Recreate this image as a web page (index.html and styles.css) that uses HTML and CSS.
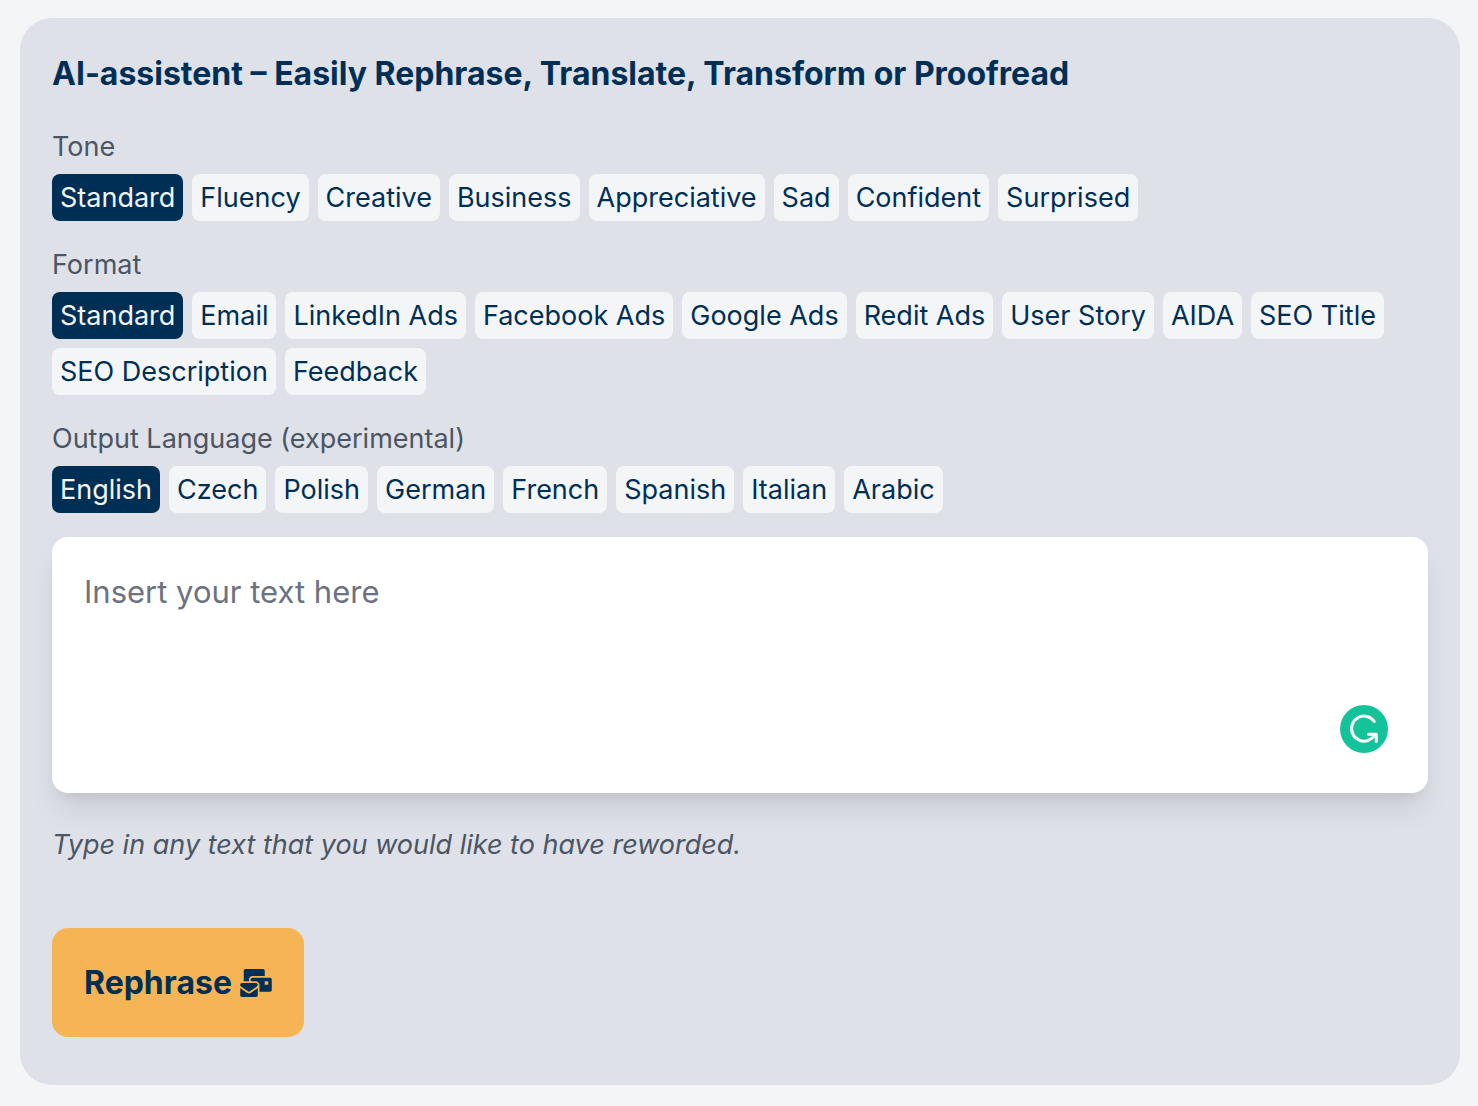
FILE: index.html
```html
<!DOCTYPE html>
<html lang="en">
<head>
    <meta charset="UTF-8">
    <meta name="viewport" content="width=device-width, initial-scale=1.0">
    <title>AI-assistent</title>
    <link rel="stylesheet" href="styles.css">
</head>
<body>
<main class="assistant">
    <h1 class="title">AI-assistent – Easily Rephrase, Translate, Transform or Proofread</h1>
    <form class="assistant-form">
        <section class="group" aria-labelledby="tone-label">
            <h2 class="group-label" id="tone-label">Tone</h2>
            <div class="options">
                <button type="button" class="option active">Standard</button>
                <button type="button" class="option">Fluency</button>
                <button type="button" class="option">Creative</button>
                <button type="button" class="option">Business</button>
                <button type="button" class="option">Appreciative</button>
                <button type="button" class="option">Sad</button>
                <button type="button" class="option">Confident</button>
                <button type="button" class="option">Surprised</button>
            </div>
        </section>
        <section class="group" aria-labelledby="format-label">
            <h2 class="group-label" id="format-label">Format</h2>
            <div class="options">
                <button type="button" class="option active">Standard</button>
                <button type="button" class="option">Email</button>
                <button type="button" class="option">LinkedIn Ads</button>
                <button type="button" class="option">Facebook Ads</button>
                <button type="button" class="option">Google Ads</button>
                <button type="button" class="option">Redit Ads</button>
                <button type="button" class="option">User Story</button>
                <button type="button" class="option">AIDA</button>
                <button type="button" class="option">SEO Title</button>
                <button type="button" class="option">SEO Description</button>
                <button type="button" class="option">Feedback</button>
            </div>
        </section>
        <section class="group" aria-labelledby="language-label">
            <h2 class="group-label" id="language-label">Output Language (experimental)</h2>
            <div class="options">
                <button type="button" class="option active">English</button>
                <button type="button" class="option">Czech</button>
                <button type="button" class="option">Polish</button>
                <button type="button" class="option">German</button>
                <button type="button" class="option">French</button>
                <button type="button" class="option">Spanish</button>
                <button type="button" class="option">Italian</button>
                <button type="button" class="option">Arabic</button>
            </div>
        </section>
        <div class="editor">
            <textarea class="editor-input" id="source-text" placeholder="Insert your text here"></textarea>
            <svg class="editor-badge" viewBox="0 0 48 48" aria-hidden="true">
                <circle cx="24" cy="24" r="24" fill="#15c39a"/>
                <g fill="none" stroke="#fff" stroke-width="3" stroke-linecap="round" stroke-linejoin="round">
                    <path d="M34.300 16.500A12.500 12.500 0 1 0 28 35.500Q32.500 33.800 35.500 29.500"/>
                    <path d="M28.500 29.200H36.300V36.500"/>
                </g>
            </svg>
        </div>
        <label class="hint" for="source-text">Type in any text that you would like to have reworded.</label>
        <button type="submit" class="submit">
            Rephrase
            <svg class="submit-icon" viewBox="0 0 576 512" aria-hidden="true">
                <path fill="currentColor" d="M160 448c-25.600 0-51.200-22.400-64-32-64-44.800-83.200-60.800-96-70.400V480c0 17.670 14.330 32 32 32h256c17.670 0 32-14.330 32-32V345.600c-12.800 9.600-32 25.600-96 70.400-12.800 9.600-38.400 32-64 32zm128-192H32c-17.670 0-32 14.330-32 32v16c25.600 19.200 22.400 19.200 115.200 86.400 9.600 6.400 28.800 25.600 44.800 25.600s35.200-19.200 44.800-25.600c92.800-67.200 89.600-67.200 115.200-86.400V288c0-17.670-14.330-32-32-32zm256-96H224c-17.670 0-32 14.330-32 32v32h96c33.210 0 60.590 25.420 63.710 57.820l.29-.22V416h192c17.670 0 32-14.330 32-32V192c0-17.670-14.330-32-32-32zm-32 128h-64v-64h64v64zm-352-96c0-35.290 28.710-64 64-64h224V32c0-17.670-14.330-32-32-32H96C78.330 0 64 14.330 64 32v192h96v-32z"/>
            </svg>
        </button>
    </form>
</main>

<script>
    document.querySelectorAll('.options').forEach((group) => {
        group.addEventListener('click', (e) => {
            if (!e.target.classList.contains('option')) return;
            group.querySelector('.active').classList.remove('active');
            e.target.classList.add('active');
        });
    });

    document.querySelector('.assistant-form').addEventListener('submit', (e) => {
        e.preventDefault();
    });
</script>
</body>
</html>
```
FILE: styles.css
```css
body {
    margin: 0;
    padding: 18px 18px 20px 20px;
    background: #f3f5f7;
    color: #002f56;
    font-family: Inter, "Liberation Sans", sans-serif;
}

button, textarea {
    font-family: inherit;
    color: inherit;
}

.assistant {
    padding: 32px 32px 48px;
    background: #dee1e8;
    border-radius: 32px;
}

.title {
    margin: 0 0 30px;
    font-size: 32px;
    line-height: 47px;
    font-weight: 700;
}

.group {
    margin-bottom: 24px;
}

.group-label {
    margin: 0 0 8px;
    color: #4b5563;
    font-size: 27px;
    line-height: 39px;
    font-weight: 400;
}

.options {
    display: flex;
    flex-wrap: wrap;
    gap: 9px;
}

.option {
    padding: 4px 8px;
    border: none;
    border-radius: 8px;
    background: #f3f5f7;
    font-size: 27px;
    line-height: 39px;
    cursor: pointer;
}

.option.active {
    background: #002f56;
    color: #f3f5f7;
}

.editor {
    position: relative;
}

.editor-input {
    display: block;
    width: 100%;
    height: 256px;
    box-sizing: border-box;
    padding: 32px;
    border: none;
    border-radius: 16px;
    background: white;
    box-shadow: 0 20px 30px -6px rgba(0, 0, 0, 0.1), 0 8px 12px -4px rgba(0, 0, 0, 0.05);
    font-size: 31px;
    line-height: 45px;
    resize: none;
}

.editor-input::placeholder {
    color: #6b7280;
}

.editor-badge {
    position: absolute;
    right: 40px;
    bottom: 40px;
    width: 48px;
    height: 48px;
}

.hint {
    display: block;
    margin: 32px 0 64px;
    color: #4b5563;
    font-size: 27px;
    line-height: 39px;
    font-style: italic;
}

.submit {
    display: flex;
    align-items: center;
    gap: 8px;
    padding: 32px;
    border: none;
    border-radius: 16px;
    background: #f6b555;
    font-size: 32px;
    line-height: 45px;
    font-weight: 700;
    cursor: pointer;
}

.submit-icon {
    width: 32px;
    height: 28px;
}
```
